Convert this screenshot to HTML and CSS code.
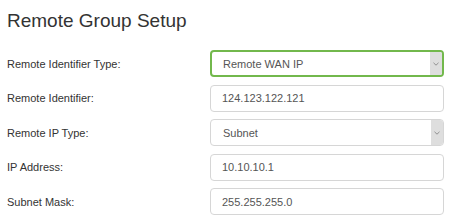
FILE: index.html
```html
<!DOCTYPE html>
<html lang="en">
<head>
  <meta charset="UTF-8">
  <title>Remote Group Setup</title>
  <link rel="stylesheet" href="styles.css">
</head>
<body>
  <div class="page">
    <h1 class="title">Remote Group Setup</h1>

    <!-- Remote group form -->
    <div class="form-grid">
      <label class="label">Remote Identifier Type:</label>
      <div class="select focused">
        <span class="select-text">Remote WAN IP</span>
        <span class="select-arrow">
          <svg width="6" height="4" viewBox="0 0 6 4"><path d="M0.5 0.8 L3 3.2 L5.5 0.8" fill="none" stroke="#888" stroke-width="0.9"/></svg>
        </span>
      </div>

      <label class="label">Remote Identifier:</label>
      <div class="input">124.123.122.121</div>

      <label class="label">Remote IP Type:</label>
      <div class="select">
        <span class="select-text">Subnet</span>
        <span class="select-arrow">
          <svg width="6" height="4" viewBox="0 0 6 4"><path d="M0.5 0.8 L3 3.2 L5.5 0.8" fill="none" stroke="#888" stroke-width="0.9"/></svg>
        </span>
      </div>

      <label class="label">IP Address:</label>
      <div class="input">10.10.10.1</div>

      <label class="label">Subnet Mask:</label>
      <div class="input">255.255.255.0</div>
    </div>
  </div>
</body>
</html>
```

FILE: styles.css
```css
body {
  margin: 0;
  padding: 0;
  background: #fff;
  font-family: "Liberation Sans", Arial, sans-serif;
}

.page {
  padding: 9px 0 0 7px;
}

.title {
  margin: 0 0 18px 0;
  font-size: 19px;
  font-weight: normal;
  color: #333;
  line-height: 23px;
}

/* Form rows */
.form-grid {
  display: grid;
  grid-template-columns: 203px 234px;
  grid-auto-rows: 27px;
  row-gap: 7.5px;
  align-items: center;
}

.label {
  font-size: 11px;
  color: #333;
}

.input,
.select {
  box-sizing: border-box;
  height: 27px;
  border: 1px solid #d6d6d6;
  border-radius: 4px;
  font-size: 11px;
  color: #555;
  display: flex;
  align-items: center;
}

.input {
  padding-left: 11px;
}

.select {
  padding-left: 12px;
  overflow: hidden;
}

.select.focused {
  border: 2px solid #72b84c;
  padding-left: 11px;
}

.select-text {
  flex: 1;
}

.select-arrow {
  width: 12px;
  align-self: stretch;
  background: #dedede;
  display: flex;
  align-items: center;
  justify-content: center;
}
```
